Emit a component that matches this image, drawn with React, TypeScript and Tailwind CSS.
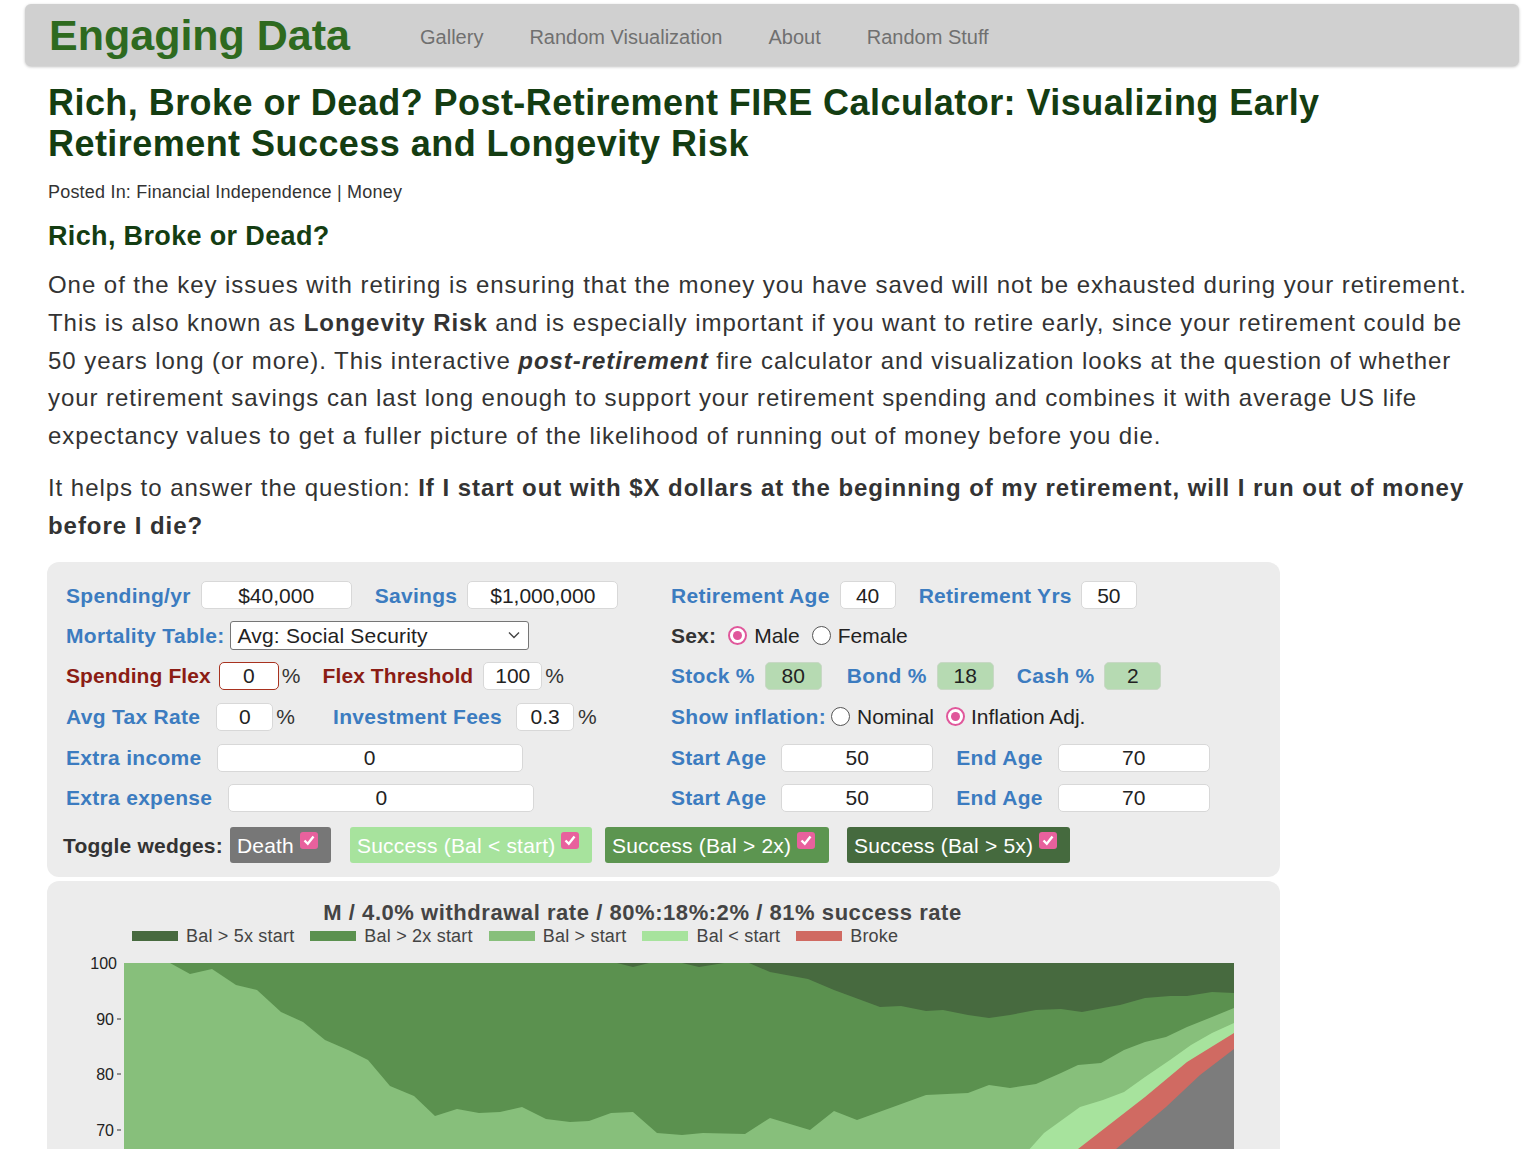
import type { ReactNode } from 'react';

const blueLabel = 'whitespace-nowrap text-[21px] font-bold tracking-[0.3px] text-[#3c7cc0]';
const redLabel = 'whitespace-nowrap text-[21px] font-bold tracking-[0.1px] text-[#8b1c14]';
const darkLabel = 'whitespace-nowrap text-[21px] font-bold tracking-[0.2px] text-[#333]';
const box =
  'h-[28px] rounded-[5px] border border-[#d8d8d8] bg-white text-center text-[21px] text-[#222] outline-none';

function Field({ value, className }: { value: string; className: string }) {
  return <input readOnly value={value} className={`${box} ${className}`} />;
}

function Radio({ checked, className }: { checked?: boolean; className: string }) {
  if (checked) {
    return (
      <span
        className={`flex h-[19px] w-[19px] items-center justify-center rounded-full border-2 border-[#e0579b] bg-white ${className}`}
      >
        <span className="h-[9px] w-[9px] rounded-full bg-[#e0579b]" />
      </span>
    );
  }
  return (
    <span
      className={`h-[19px] w-[19px] rounded-full border border-[#555] bg-white ${className}`}
    />
  );
}

function Check() {
  return (
    <span className="ml-[6px] mt-[5px] flex h-[17px] w-[18px] items-center justify-center self-start rounded-[3px] bg-[#e8619d]">
      <svg width="12" height="11" viewBox="0 0 12 11">
        <path d="M1.5 5.5 L4.8 8.8 L10.5 1.5" fill="none" stroke="white" strokeWidth="2.4" />
      </svg>
    </span>
  );
}

function Wedge({ label, className }: { label: string; className: string }) {
  return (
    <div
      className={`flex h-[36px] items-center rounded-[3px] pl-[7px] text-[21px] tracking-[0.2px] text-white ${className}`}
    >
      <span className="whitespace-nowrap">{label}</span>
      <Check />
    </div>
  );
}

function Row({ left, right, className = 'h-[40px]' }: { left: ReactNode; right: ReactNode; className?: string }) {
  return (
    <div className={`flex items-center ${className}`}>
      <div className="flex w-[605px] items-center">{left}</div>
      <div className="flex items-center">{right}</div>
    </div>
  );
}

const BOTTOM = 1210;

type Pt = [number, number];

function area(points: Pt[]) {
  const all: Pt[] = [...points, [1234, BOTTOM], [points[0][0], BOTTOM]];
  return all.map((p) => p.join(',')).join(' ');
}

const top5x: Pt[] = [
  [124, 963], [617, 963], [633, 967], [649, 963], [682, 963], [699, 967], [724, 963],
  [749, 963], [770, 972], [808, 979], [834, 990], [880, 1007], [901, 1006], [926, 1011],
  [943, 1010], [968, 1015], [989, 1018], [1010, 1015], [1036, 1010], [1061, 1009],
  [1082, 1012], [1103, 1008], [1120, 1005], [1145, 998], [1170, 996], [1187, 996],
  [1212, 992], [1234, 993],
];

const top2x: Pt[] = [
  [124, 963], [170, 963], [190, 974], [212, 969], [236, 985], [257, 990], [281, 1012],
  [303, 1022], [325, 1040], [348, 1050], [368, 1060], [390, 1086], [414, 1096],
  [435, 1116], [457, 1109], [479, 1113], [500, 1112], [522, 1107], [546, 1119],
  [570, 1122], [589, 1121], [611, 1113], [633, 1112], [657, 1133], [682, 1135],
  [703, 1133], [745, 1134], [770, 1118], [810, 1130], [834, 1111], [857, 1120],
  [893, 1107], [926, 1095], [968, 1093], [989, 1085], [1010, 1088], [1036, 1084],
  [1061, 1073], [1078, 1065], [1101, 1063], [1124, 1050], [1145, 1042], [1166, 1037],
  [1187, 1027], [1212, 1017], [1234, 1008],
];

const topUnder: Pt[] = [
  [1018, 1162], [1044, 1133], [1080, 1107], [1103, 1100], [1124, 1092], [1145, 1077],
  [1170, 1060], [1191, 1045], [1212, 1033], [1234, 1023],
];

const topBroke: Pt[] = [[1066, 1160], [1078, 1149], [1145, 1097], [1187, 1062], [1234, 1033]];

const topDeath: Pt[] = [[1105, 1160], [1116, 1149], [1166, 1107], [1200, 1075], [1234, 1049]];

function Chart() {
  const ticks = [
    { v: '90', y: 1019 },
    { v: '80', y: 1074 },
    { v: '70', y: 1130 },
  ];
  return (
    <svg width="1233" height="264" viewBox="47 946 1233 264" className="block">
      <defs>
        <clipPath id="plot">
          <rect x="124" y="963" width="1110" height="260" />
        </clipPath>
      </defs>
      <g clipPath="url(#plot)">
        <rect x="124" y="963" width="1110" height="260" fill="#476a3f" />
        <polygon points={area(top5x)} fill="#5b914f" />
        <polygon points={area(top2x)} fill="#87bf7b" />
        <polygon points={area(topUnder)} fill="#a7e39d" />
        <polygon points={area(topBroke)} fill="#d06a62" />
        <polygon points={area(topDeath)} fill="#7c7c7c" />
      </g>
      <g fontFamily="'Liberation Sans', Arial, sans-serif" fontSize="16" fill="#222">
        <text x="117" y="969" textAnchor="end">100</text>
        {ticks.map((t) => (
          <g key={t.v}>
            <text x="114" y={t.y + 6} textAnchor="end">{t.v}</text>
            <line x1="117" x2="121" y1={t.y} y2={t.y} stroke="#333" strokeWidth="1" />
          </g>
        ))}
      </g>
    </svg>
  );
}

const legend = [
  { label: 'Bal > 5x start', color: 'bg-[#476a3f]', gap: 'ml-0' },
  { label: 'Bal > 2x start', color: 'bg-[#5b914f]', gap: 'ml-[16px]' },
  { label: 'Bal > start', color: 'bg-[#87bf7b]', gap: 'ml-[16px]' },
  { label: 'Bal < start', color: 'bg-[#a7e39d]', gap: 'ml-[16px]' },
  { label: 'Broke', color: 'bg-[#d06a62]', gap: 'ml-[16px]' },
];

export default function App() {
  return (
    <div className="min-h-[1220px] bg-white pt-[4px] font-['Liberation_Sans',Arial,sans-serif] text-[#333]">
      <header className="ml-[25px] flex h-[62px] w-[1494px] items-center rounded-[6px] bg-[#d0d0d0] pl-[24px] shadow-[0_1px_3px_rgba(0,0,0,0.25)]">
        <span className="text-[43px] font-bold leading-none text-[#2e6a1f]">Engaging Data</span>
        <nav className="ml-[70px] flex gap-[46px] pt-[3px] text-[20px] text-[#707070]">
          <span>Gallery</span>
          <span>Random Visualization</span>
          <span>About</span>
          <span>Random Stuff</span>
        </nav>
      </header>

      <main className="pl-[48px]">
        <h1 className="mt-[16px] w-[1432px] text-[36px] font-bold leading-[41px] tracking-[0.45px] text-[#143d12]">
          Rich, Broke or Dead? Post-Retirement FIRE Calculator: Visualizing Early Retirement Success and
          Longevity Risk
        </h1>

        <p className="mt-[18px] text-[18px] leading-[20px] tracking-[0.2px] text-[#333]">
          Posted In: Financial Independence | Money
        </p>

        <h2 className="mt-[18px] text-[27px] font-bold leading-[32px] tracking-[0.35px] text-[#143d12]">
          Rich, Broke or Dead?
        </h2>

        <p className="mt-[14px] w-[1432px] text-[24px] leading-[37.75px] tracking-[0.95px] text-[#333]">
          One of the key issues with retiring is ensuring that the money you have saved will not be
          exhausted during your retirement. This is also known as <b>Longevity Risk</b> and is
          especially important if you want to retire early, since your retirement could be 50 years
          long (or more). This interactive <b><i>post-retirement</i></b> fire calculator and
          visualization looks at the question of whether your retirement savings can last long
          enough to support your retirement spending and combines it with average US life expectancy
          values to get a fuller picture of the likelihood of running out of money before you die.
        </p>

        <p className="mt-[14px] w-[1432px] text-[24px] leading-[37.75px] tracking-[0.95px] text-[#333]">
          It helps to answer the question:{' '}
          <b>If I start out with $X dollars at the beginning of my retirement, will I run out of money before I die?</b>
        </p>

        {/* controls */}
        <section className="-ml-px mt-[18px] w-[1233px] rounded-[12px] bg-[#ececec] pb-[14px] pl-[19px] pt-[13px]">
          <Row
            left={
              <>
                <span className={blueLabel}>Spending/yr</span>
                <Field value="$40,000" className="ml-[10px] w-[151px]" />
                <span className={`${blueLabel} ml-[23px]`}>Savings</span>
                <Field value="$1,000,000" className="ml-[10px] w-[151px]" />
              </>
            }
            right={
              <>
                <span className={blueLabel}>Retirement Age</span>
                <Field value="40" className="ml-[10px] w-[56px]" />
                <span className={`${blueLabel} ml-[23px]`}>Retirement Yrs</span>
                <Field value="50" className="ml-[9px] w-[56px]" />
              </>
            }
          />
          <Row
            left={
              <>
                <span className={blueLabel}>Mortality Table:</span>
                <div className="ml-[6px] flex h-[29px] w-[299px] items-center justify-between rounded-[3px] border border-[#767676] bg-white pl-[6px] pr-[8px] text-[21px] tracking-[0.2px] text-[#222]">
                  <span>Avg: Social Security</span>
                  <svg width="12" height="8" viewBox="0 0 12 8">
                    <path d="M1 1.5 L6 6.5 L11 1.5" fill="none" stroke="#444" strokeWidth="1.4" />
                  </svg>
                </div>
              </>
            }
            right={
              <>
                <span className={darkLabel}>Sex:</span>
                <Radio checked className="ml-[12px]" />
                <span className="ml-[7px] text-[21px] text-[#222]">Male</span>
                <Radio className="ml-[12px]" />
                <span className="ml-[7px] text-[21px] text-[#222]">Female</span>
              </>
            }
          />
          <Row
            className="h-[41px]"
            left={
              <>
                <span className={redLabel}>Spending Flex</span>
                <Field value="0" className="ml-[8px] w-[60px] !border-[#a8321f]" />
                <span className="ml-[3px] text-[21px] text-[#333]">%</span>
                <span className={`${redLabel} ml-[22px]`}>Flex Threshold</span>
                <Field value="100" className="ml-[10px] w-[59px]" />
                <span className="ml-[3px] text-[21px] text-[#333]">%</span>
              </>
            }
            right={
              <>
                <span className={blueLabel}>Stock %</span>
                <Field value="80" className="ml-[10px] w-[57px] !border-[#c8d8c5] !bg-[#b6dab2]" />
                <span className={`${blueLabel} ml-[25px]`}>Bond %</span>
                <Field value="18" className="ml-[10px] w-[57px] !border-[#c8d8c5] !bg-[#b6dab2]" />
                <span className={`${blueLabel} ml-[23px]`}>Cash %</span>
                <Field value="2" className="ml-[10px] w-[57px] !border-[#c8d8c5] !bg-[#b6dab2]" />
              </>
            }
          />
          <Row
            className="h-[41px]"
            left={
              <>
                <span className={blueLabel}>Avg Tax Rate</span>
                <Field value="0" className="ml-[16px] w-[57px]" />
                <span className="ml-[3px] text-[21px] text-[#333]">%</span>
                <span className={`${blueLabel} ml-[38px]`}>Investment Fees</span>
                <Field value="0.3" className="ml-[14px] w-[58px]" />
                <span className="ml-[4px] text-[21px] text-[#333]">%</span>
              </>
            }
            right={
              <>
                <span className={blueLabel}>Show inflation:</span>
                <Radio className="ml-[5px]" />
                <span className="ml-[7px] text-[21px] text-[#222]">Nominal</span>
                <Radio checked className="ml-[12px]" />
                <span className="ml-[6px] text-[21px] text-[#222]">Inflation Adj.</span>
              </>
            }
          />
          <Row
            className="h-[41px]"
            left={
              <>
                <span className={blueLabel}>Extra income</span>
                <Field value="0" className="ml-[15px] w-[306px]" />
              </>
            }
            right={
              <>
                <span className={blueLabel}>Start Age</span>
                <Field value="50" className="ml-[15px] w-[152px]" />
                <span className={`${blueLabel} ml-[23px]`}>End Age</span>
                <Field value="70" className="ml-[15px] w-[152px]" />
              </>
            }
          />
          <Row
            className="h-[39px]"
            left={
              <>
                <span className={blueLabel}>Extra expense</span>
                <Field value="0" className="ml-[16px] w-[306px]" />
              </>
            }
            right={
              <>
                <span className={blueLabel}>Start Age</span>
                <Field value="50" className="ml-[15px] w-[152px]" />
                <span className={`${blueLabel} ml-[23px]`}>End Age</span>
                <Field value="70" className="ml-[15px] w-[152px]" />
              </>
            }
          />
          <div className="-ml-[3px] mt-[10px] flex items-center">
            <span className={darkLabel}>Toggle wedges:</span>
            <Wedge label="Death" className="ml-[7px] w-[101px] bg-[#777777]" />
            <Wedge label="Success (Bal < start)" className="ml-[19px] w-[242px] bg-[#a7e39d]" />
            <Wedge label="Success (Bal > 2x)" className="ml-[13px] w-[224px] bg-[#5c9550]" />
            <Wedge label="Success (Bal > 5x)" className="ml-[18px] w-[223px] bg-[#456a3e]" />
          </div>
        </section>

        {/* chart */}
        <section className="-ml-px mt-[4px] w-[1233px] rounded-t-[12px] bg-[#ececec] pt-[19px]">
          <div className="pr-[42px] text-center text-[22px] font-bold leading-[26px] tracking-[0.55px] text-[#444]">
            M / 4.0% withdrawal rate / 80%:18%:2% / 81% success rate
          </div>
          <div className="flex h-[20px] items-center pl-[85px] text-[18px] tracking-[0.2px] text-[#444]">
            {legend.map((l) => (
              <div key={l.label} className={`flex items-center ${l.gap}`}>
                <span className={`h-[10px] w-[46px] ${l.color}`} />
                <span className="ml-[8px] whitespace-nowrap">{l.label}</span>
              </div>
            ))}
          </div>
          <Chart />
        </section>
      </main>
    </div>
  );
}
